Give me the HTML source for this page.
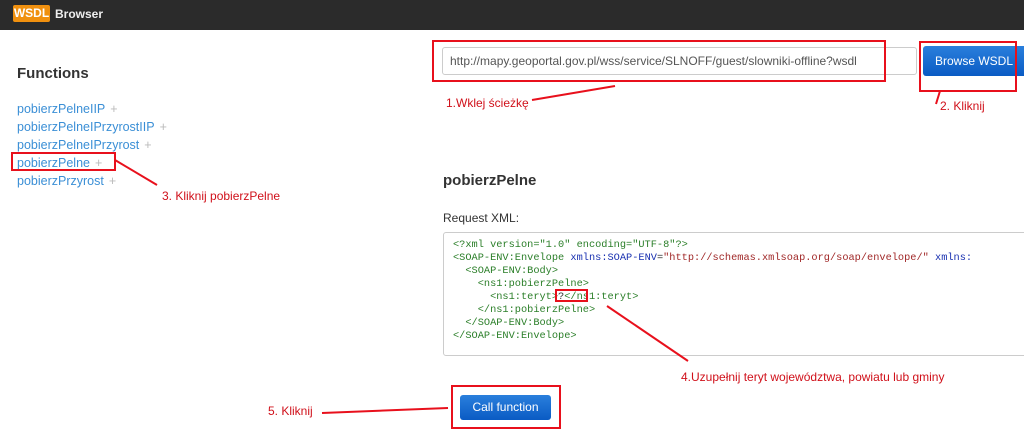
<!DOCTYPE html><html><head><style>
body{margin:0;width:1024px;height:447px;background:#fff;position:relative;overflow:hidden;font-family:"Liberation Sans",sans-serif}
.nav{position:absolute;left:0;top:0;width:1024px;height:30px;background:#2b2b2b}
.badge{position:absolute;left:13px;top:5px;width:37px;height:17px;background:#f0900f;border-radius:2px;color:#fff;font-weight:bold;font-size:12px;line-height:17px;text-align:center}
.brand{position:absolute;left:55px;top:6px;color:#eee;font-weight:bold;font-size:12px;line-height:16px}
.a{position:absolute;color:#d0101a;font-size:12px;white-space:nowrap}
.fn{position:absolute;left:17px;color:#3b8fd6;font-size:12.5px}
.fn i{color:#bbb;font-style:normal;margin-left:5px}
pre{position:absolute;left:443px;top:232px;width:600px;height:124px;margin:0;border:1px solid #ccc;border-radius:3px;background:#fff;font-family:"Liberation Mono",monospace;font-size:10.3px;line-height:13px;padding:6px 0 0 9px;box-sizing:border-box;color:#333;overflow:hidden}
.g{color:#2a7e28}.b{color:#1830b0}.r{color:#a02828}
</style></head><body>
<div class="nav"><div class="badge">WSDL</div><div class="brand">Browser</div></div>
<div style="position:absolute;left:17px;top:65px;font-weight:bold;font-size:15px;color:#333">Functions</div>
<div class="fn" style="top:102px">pobierzPelneIIP<i>+</i></div>
<div class="fn" style="top:120px">pobierzPelneIPrzyrostIIP<i>+</i></div>
<div class="fn" style="top:138px">pobierzPelneIPrzyrost<i>+</i></div>
<div class="fn" style="top:156px">pobierzPelne<i>+</i></div>
<div class="fn" style="top:174px">pobierzPrzyrost<i>+</i></div>
<div style="position:absolute;left:442px;top:47px;width:475px;height:28px;border:1px solid #ccc;border-radius:3px;box-sizing:border-box;font-size:12px;color:#555;line-height:26px;padding-left:7px">http://mapy.geoportal.gov.pl/wss/service/SLNOFF/guest/slowniki-offline?wsdl</div>
<div style="position:absolute;left:923px;top:46px;width:101px;height:30px;background:linear-gradient(#2a7fdc,#0a5bc4);border-radius:3px 0 0 3px;color:#fff;font-size:12px;line-height:30px;padding-left:12px;box-sizing:border-box">Browse WSDL</div>
<div style="position:absolute;left:443px;top:172px;font-weight:bold;font-size:15px;color:#333">pobierzPelne</div>
<div style="position:absolute;left:443px;top:211px;font-size:12px;color:#333">Request XML:</div>
<pre><span class="g">&lt;?xml version="1.0" encoding="UTF-8"?&gt;</span>
<span class="g">&lt;SOAP-ENV:Envelope</span> <span class="b">xmlns:SOAP-ENV</span>=<span class="r">"http://schemas.xmlsoap.org/soap/envelope/"</span> <span class="b">xmlns:</span>
<span class="g">  &lt;SOAP-ENV:Body&gt;</span>
<span class="g">    &lt;ns1:pobierzPelne&gt;</span>
<span class="g">      &lt;ns1:teryt&gt;</span>?<span class="g">&lt;/ns1:teryt&gt;</span>
<span class="g">    &lt;/ns1:pobierzPelne&gt;</span>
<span class="g">  &lt;/SOAP-ENV:Body&gt;</span>
<span class="g">&lt;/SOAP-ENV:Envelope&gt;</span></pre>
<div style="position:absolute;left:460px;top:395px;width:91px;height:25px;background:linear-gradient(#2a7fdc,#0a5bc4);border-radius:3px;color:#fff;font-size:12px;line-height:25px;text-align:center">Call function</div>
<svg style="position:absolute;left:0;top:0" width="1024" height="447" fill="none" stroke="#e8101c" stroke-width="2">
<rect x="433" y="41" width="452" height="40"/>
<rect x="920" y="42" width="96" height="49"/>
<rect x="12" y="153" width="103" height="17"/>
<rect x="556" y="290" width="31" height="11"/>
<rect x="452" y="386" width="108" height="42"/>
<path d="M532 100L615 86"/><path d="M940 91L936 104"/><path d="M115 160L157 185"/><path d="M607 306L688 361"/><path d="M322 413L448 408"/>
</svg>
<div class="a" style="left:446px;top:96px">1.Wklej ścieżkę</div>
<div class="a" style="left:940px;top:99px">2. Kliknij</div>
<div class="a" style="left:162px;top:189px">3. Kliknij pobierzPelne</div>
<div class="a" style="left:681px;top:370px">4.Uzupełnij teryt województwa, powiatu lub gminy</div>
<div class="a" style="left:268px;top:404px">5. Kliknij</div>
</body></html>
